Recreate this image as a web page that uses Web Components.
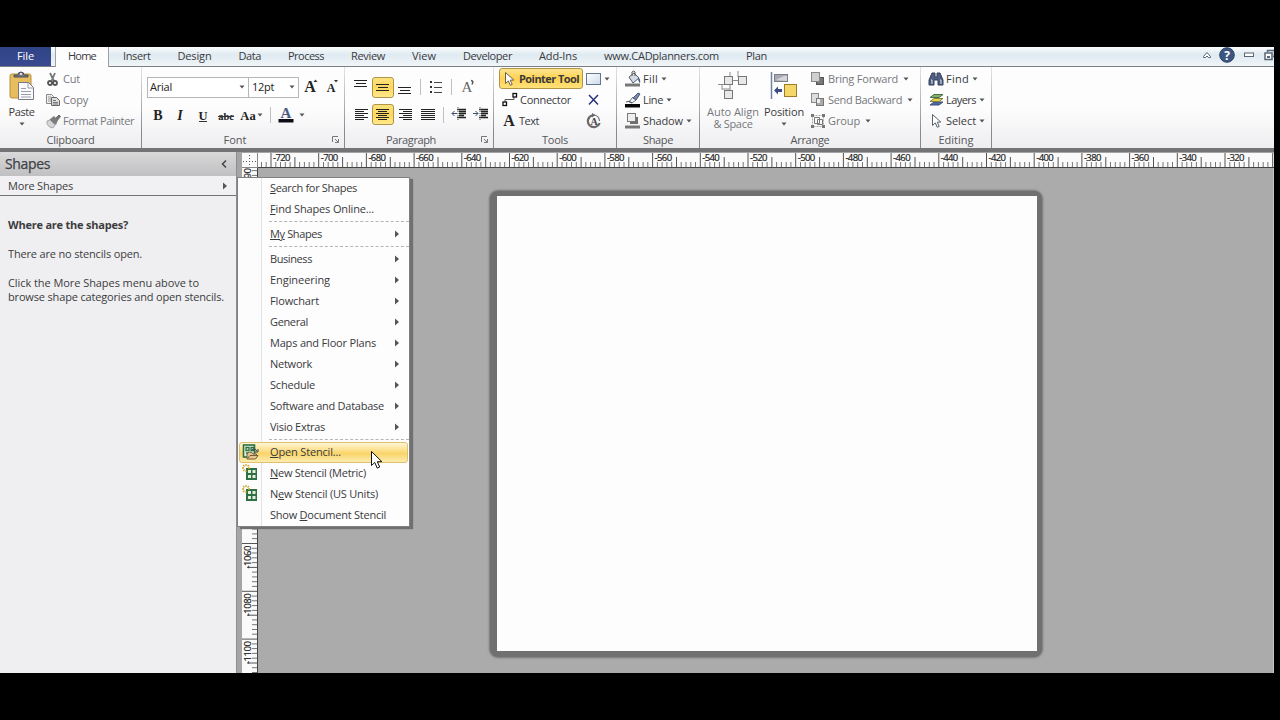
<!DOCTYPE html>
<html lang="en">
<head>
<meta charset="utf-8">
<title>Shapes</title>
<style>
  html, body { margin:0; height:100%; background:#000; overflow:hidden; }
  body { font:11px/14px "Open Sans","Noto Sans",sans-serif; color:#3a3a3c; }
</style>
</head>
<body>
<visio-app></visio-app>

<script>
(() => {
  const define = (name, html, setup) => {
    customElements.define(name, class extends HTMLElement {
      constructor() {
        super();
        this.attachShadow({ mode: "open" });
      }
      connectedCallback() {
        this.shadowRoot.innerHTML = typeof html === "function" ? html(this) : html;
        setup?.(this);
      }
    });
  };

  const svg = (w, h, body) => `<svg width="${w}" height="${h}" viewBox="0 0 ${w} ${h}" fill="none">${body}</svg>`;
  const lines = (rows, h = 16) => svg(14, h, rows.map(([x1, x2, y]) => `<path d="M${x1} ${y}.5H${x2}" stroke="#222"/>`).join(""));
  const glyph = (w, h, text, style, extra = "") =>
    svg(w, h, `<text x="${w / 2}" y="${h - 4}" text-anchor="middle" fill="#222" style="${style}">${text}</text>${extra}`);
  const serif = "font-family:'Liberation Serif',serif;font-weight:bold;";

  const icons = {
    paste: svg(26, 30, `<rect x="1" y="3" width="21" height="24" rx="2" fill="#e7bd5f" stroke="#b98f3c"/><path d="M5 6V4h4q0-3 3-3t3 3h4v2z" fill="#777985" stroke="#4c4e58"/><circle cx="12" cy="3" r="1" fill="#fff"/><path d="M9.500 11.500h10l5 5v12h-15z" fill="#fbfbfd" stroke="#777b88"/><path d="M19 12v5h5M12 17.500h5M12 20.500h10M12 23.500h10M12 26h10" stroke="#9a9eaa"/>`),
    cut: svg(16, 16, `<path d="M5 2l4 8M10 2L6.500 10" stroke="#777" stroke-width="1.800"/><circle cx="5" cy="12" r="2" stroke="#555" stroke-width="1.800"/><circle cx="10" cy="12" r="2" stroke="#555" stroke-width="1.800"/>`),
    copy: svg(16, 16, `<path d="M1.500 2.500h5l2 2v7h-7z" fill="#eee" stroke="#888"/><path d="M3 5h3M3 7h4M3 9h4" stroke="#999"/><path d="M6.500 5.500h5l3 3v5h-8z" fill="#ddd" stroke="#666"/><path d="M8 8.500h3M8 10.500h5M8 12h5" stroke="#777"/>`),
    painter: svg(16, 16, `<path d="M9 7l5-5 1.500 1.500L11 9z" fill="#777" stroke="#666"/><path d="M4 7l5-4 4 4-2 5z" fill="#7c7c7c"/><path d="M2 8l3-1 5 5-2 3q-4 0-6-4z" fill="#d5d5d5" stroke="#aaa"/>`),
    grow: glyph(18, 18, "A", serif + "font-size:16px", `<path d="M12.500 4l2-2.500 2 2.500z" fill="#333"/>`),
    shrink: glyph(16, 18, "A", serif + "font-size:12px", `<path d="M11 2h4l-2 2.500z" fill="#333"/>`),
    bold: glyph(16, 18, "B", serif + "font-size:14px"),
    italic: glyph(16, 18, "I", serif + "font-style:italic;font-size:14px"),
    underline: glyph(16, 18, "U", serif + "font-size:12.5px", `<path d="M4 15.500h8" stroke="#333"/>`),
    strike: glyph(20, 18, "abc", serif + "font-size:10.5px", `<path d="M2 10.500h16" stroke="#333"/>`),
    caps: glyph(18, 18, "Aa", serif + "font-size:12.5px"),
    color: svg(18, 18, `<text x="9" y="12" text-anchor="middle" fill="#4d5a7c" style="${serif}font-size:15px">A</text><path d="M1.500 13h15v3.500h-15z" fill="#0c0c14"/>`),
    vtop: lines([[0, 13, 1], [2, 12, 4], [0, 13, 7]]),
    vmid: lines([[0, 13, 5], [2, 12, 8], [0, 13, 11]]),
    vbot: lines([[0, 13, 8], [2, 12, 11], [0, 13, 14]]),
    left: lines([[1, 14, 2], [1, 10, 4], [1, 14, 6], [1, 10, 8], [1, 14, 10], [1, 10, 12]]),
    center: lines([[0, 13, 2], [2, 11, 4], [0, 13, 6], [2, 11, 8], [0, 13, 10], [2, 11, 12]]),
    right: lines([[0, 13, 2], [4, 13, 4], [0, 13, 6], [4, 13, 8], [0, 13, 10], [4, 13, 12]]),
    justify: lines([[0, 14, 2], [0, 14, 4], [0, 14, 6], [0, 14, 8], [0, 14, 10], [0, 14, 12]]),
    bullets: svg(14, 16, `<path d="M5 3.500h8M5 8.500h8M5 13.500h8" stroke="#444"/><path d="M1 2h2v2H1zM1 7h2v2H1zM1 12h2v2H1z" fill="#333"/>`),
    rotateText: svg(16, 18, `<text x="7" y="14" text-anchor="middle" fill="#666" style="${serif}font-size:15px;font-weight:normal">A</text><path d="M11 2.500q3 0 1 4" stroke="#555" stroke-width="1.500"/>`),
    outdent: svg(16, 16, `<path d="M6 2.500h9M8 4.500h7M8 6.500h7M8 8.500h5M6 10.500h9" stroke="#222" stroke-width="1.300"/><path d="M7 0v14" stroke="#555" stroke-dasharray="1 1"/><path d="M1 6.500h5M3.500 4L1 6.500 3.500 9" stroke="#3a4a70"/>`),
    indent: svg(16, 16, `<path d="M6 2.500h9M8 4.500h7M8 6.500h7M8 8.500h5M6 10.500h9" stroke="#222" stroke-width="1.300"/><path d="M7 0v14" stroke="#555" stroke-dasharray="1 1"/><path d="M0 6.500h5M2.500 4L5 6.500 2.500 9" stroke="#3a4a70"/>`),
    pointer: svg(12, 16, `<path d="M2.500 1.500v11l2.800-2.600 2 4.400 1.900-.9-2-4.200 3.600-.2z" fill="#fff" stroke="#66604e"/>`),
    connector: svg(16, 16, `<path d="M3 10V7.500h9V5" stroke="#555"/><rect x="1" y="10" width="3.500" height="3.500" fill="#fff" stroke="#111" stroke-width="1.300"/><rect x="11" y="1.500" width="3.500" height="3.500" fill="#fff" stroke="#111" stroke-width="1.300"/>`),
    text: glyph(16, 18, "A", serif + "font-size:16px"),
    rect: svg(16, 14, `<defs><linearGradient id="g" x2="1" y2="1"><stop stop-color="#fff"/><stop offset="1" stop-color="#cddbea"/></linearGradient></defs><rect x=".5" y="1.500" width="14" height="11" fill="url(#g)" stroke="#65778f"/>`),
    cross: svg(16, 14, `<path d="M3 2l9 9.500M12 2L3 11.500" stroke="#27317c" stroke-width="1.500"/>`),
    textBlock: svg(16, 16, `<path d="M6.500 2.300A6 6 0 1 0 13.600 10" stroke="#6a6a6e" stroke-width="2.200"/><path d="M7 2q6 0 6.500 6" stroke="#6a6a6e" stroke-width="1.200"/><path d="M6 0l3.500 2L6 4.500z" fill="#6a6a6e"/><text x="8" y="11.500" text-anchor="middle" fill="#444" style="${serif}font-size:10px">A</text>`),
    fill: svg(18, 18, `<path d="M5 7l5-4 5 5-6 5z" fill="#d5d9e1" stroke="#596072"/><path d="M8 6V2q2-2 3 0v4" stroke="#555"/><path d="M14 7q3 2 2 6-2-1-2-6z" fill="#4b5d86"/><path d="M1 13.500h15v3H1z" fill="#777"/>`),
    line: svg(18, 18, `<path d="M5 11l4-5 3 3-4 3z" fill="#f5f5f5" stroke="#69718a"/><path d="M9 7l5-5 2 1-4 6z" fill="#7a88ad" stroke="#4c5778"/><path d="M2 11q4-2 6 1" stroke="#555"/><path d="M1 13h15v3.500H1z" fill="#080808"/>`),
    shadow: svg(18, 18, `<path d="M6 5h8v7H6z" fill="#6e6e6e"/><rect x="3.500" y="1.500" width="8" height="8" fill="#eee" stroke="#777"/><path d="M1 13.500h15v3H1z" fill="#777"/>`),
    autoAlign: svg(30, 30, `<path d="M12 1v24M20 0v6M1 13.500h10M4 18h8M0 13.500h4v5M12 9.500h16" stroke="#8d8d8d"/><rect x="6.500" y="5.500" width="8" height="8" fill="#e8e8e8" stroke="#777"/><rect x="20.500" y="5.500" width="8" height="8" fill="#e8e8e8" stroke="#777"/><rect x="6.500" y="19.500" width="8" height="8" fill="#e8e8e8" stroke="#777"/>`),
    position: svg(28, 30, `<path d="M1.500 1v27" stroke="#7182a4" stroke-width="1.500"/><rect x="4.500" y="3.500" width="13" height="7" fill="#a8a9b3" stroke="#7c7e88"/><path d="M6 9l8-4h3v5z" fill="#d5d6db"/><rect x="14.500" y="13.500" width="12" height="12" fill="#f5d668" stroke="#a07b2a"/><path d="M4 19.500l4-4v2.500h4v3H8v2.500z" fill="#3e4c86"/>`),
    forward: svg(16, 16, `<rect x="6.500" y="6.500" width="7" height="7" fill="#777" stroke="#555"/><rect x="1.500" y="1.500" width="8" height="9" fill="#cfcfcf" stroke="#888"/>`),
    backward: svg(16, 16, `<rect x="1.500" y="1.500" width="7" height="9" fill="#ddd" stroke="#888"/><rect x="6.500" y="6.500" width="7" height="7" fill="#aaa" stroke="#777"/><path d="M7 7h3v4H7z" fill="#eee"/>`),
    group: svg(16, 16, `<path d="M2.500 2.500h11v11h-11z" stroke="#aaa" stroke-dasharray="2 1"/><path d="M4.500 4.500h5v6h-5zM7.500 6.500h5v5h-5z" stroke="#777"/><path d="M1 1h3v3H1zM12 1h3v3h-3zM1 12h3v3H1zM12 12h3v3h-3z" fill="#777"/>`),
    find: svg(16, 16, `<path d="M4 2h3v4h2V2h3l3 7v5h-5V9H6v5H1V9z" fill="#4f5e7f" stroke="#34415e"/><path d="M3 9h1v4M12 9h1v4" stroke="#dbe3f2"/>`),
    layers: svg(16, 16, `<path d="M2 13l4-3h9l-4 3z" fill="#506a9f" stroke="#3a4f7d"/><path d="M2 9.500l4-3h9l-4 3z" fill="#e8d24d" stroke="#81853c"/><path d="M2 5.500l4-3h9l-4 3z" fill="#84b06a" stroke="#496e4b"/>`),
    select: svg(16, 16, `<path d="M4.500 1.500v11l2.800-2.600 2 4.400 1.900-.9-2-4.200 3.600-.2z" fill="#fff" stroke="#59606e"/>`),
    launcher: svg(8, 8, `<path d="M.5 6V.5H6M3 3l3 3M6.500 3v3.500H3" stroke="#777"/>`),
    down: svg(6, 4, `<path d="M.5 .5h5L3 3.500z" fill="#555"/>`),
    arrow: svg(6, 8, `<path d="M1 .5v7l4-3.500z" fill="#555"/>`),
    chevron: svg(6, 10, `<path d="M5 1.500L1.500 5 5 8.500" stroke="#444" stroke-width="1.500"/>`),
    collapse: svg(10, 8, `<path d="M1.500 5.500L5 1.500l3.500 4v1h-2L5 5 3.500 6.500h-2z" fill="#fff" stroke="#526273"/>`),
    help: svg(16, 16, `<circle cx="8" cy="8" r="7.300" fill="#3c5681" stroke="#2e4368"/><text x="8" y="12.500" text-anchor="middle" fill="#fff" style="font:bold 12px 'Open Sans',sans-serif">?</text>`),
    minimize: svg(11, 6, `<rect x=".5" y="1" width="9" height="3.500" fill="#fff" stroke="#596675"/>`),
    restore: svg(11, 12, `<path d="M3.500 3V1.500h7v6H9" stroke="#596675" stroke-width="1.500"/><rect x="1" y="4" width="7" height="6.500" fill="#fff" stroke="#596675" stroke-width="1.500"/><path d="M3 7h3v2H3z" fill="#596675"/>`),
    openStencil: svg(18, 18, `<rect x="1.500" y="2" width="11" height="12" fill="#e4f0df" stroke="#2e7041" stroke-width="1.600"/><path d="M4 4.500h3v3H4zM9 4.500h3v3H9zM4 10h2" stroke="#2e7041" stroke-width="1.300"/><path d="M5 16V11l2-2 3 .5 1 1.500h3.500v1.500H16L13.500 16z" fill="#e2c592" stroke="#75603b"/><path d="M5.500 15.500l2.500-3h8" stroke="#75603b"/><path d="M9.500 7q3.500-3 5.500 1.500M16 6v3h-3" stroke="#31465f"/>`),
    newStencil: svg(18, 18, `<rect x="4" y="4" width="11" height="12" fill="#2e7041"/><path d="M6 6h3v3H6zM10.500 6h3v3h-3zM6 11h3v3H6zM10.500 11h3v3h-3z" fill="#e4f0df"/><path d="M4 0v2M4 6v2M0 4h2M6 4h2M1 1l1.500 1.500M7 1L5.500 2.500M1 7l1.500-1.500" stroke="#d0a92c" stroke-width="1.300"/>`),
    cursor: svg(14, 20, `<path d="M1.500 1.500v14l3.300-3 2.400 5.600 2.500-1.100-2.400-5.300h4.600z" fill="#fff" stroke="#111"/>`)
  };

  define("ui-icon", el => `<style>:host{display:block;flex:none;line-height:0}svg{display:block}</style>${icons[el.getAttribute("name")]}`);

  const drop = `<ui-icon name="down"></ui-icon>`;

  define("ribbon-tabs", `
    <style>
      :host{display:flex;height:20px;box-sizing:border-box;align-items:stretch;background:linear-gradient(#fbfdfe,#dfeaf1 40%,#f0f5f8);border-bottom:1px solid #7c8084}
      .file{width:51px;padding-bottom:2px;box-sizing:border-box;background:linear-gradient(#2f4386,#3a4a90);color:#fff;display:flex;justify-content:center;align-items:center;margin-right:4px}
      .home{height:20px;width:54px;padding-bottom:3px;box-sizing:border-box;background:#fdfdfe;border:1px solid #9aa0a6;border-bottom:0;border-width:0 1px;display:flex;justify-content:center;align-items:center;margin-right:14px}
      nav{display:flex;gap:27px;align-items:center;padding-bottom:2px}
      .win{margin-left:auto;display:flex;align-items:center;overflow:hidden;padding-bottom:3px}
    </style>
    <div class="file"><ui-label w="17">File</ui-label></div>
    <div class="home"><ui-label w="28">Home</ui-label></div>
    <nav>
      <ui-label w="27.500">Insert</ui-label><ui-label w="34">Design</ui-label><ui-label w="22.500">Data</ui-label>
      <ui-label w="36">Process</ui-label><ui-label w="34">Review</ui-label><ui-label w="24">View</ui-label>
      <ui-label w="49">Developer</ui-label><ui-label w="38">Add-Ins</ui-label>
      <ui-label w="115">www.CADplanners.com</ui-label><ui-label w="21">Plan</ui-label>
    </nav>
    <div class="win">
      <ui-icon name="collapse"></ui-icon>
      <ui-icon name="help" style="margin:0 9px 0 7px"></ui-icon>
      <ui-icon name="minimize" style="margin-right:9px"></ui-icon>
      <ui-icon name="restore" style="margin-right:-1px"></ui-icon>
    </div>`);

  define("ribbon-group", el => `
    <style>
      :host{display:flex;flex-direction:column;flex:none;box-sizing:border-box;width:${el.getAttribute("width")}px;padding-top:1px;border-right:1px solid;border-image:linear-gradient(#e6e6e8,#87898c 80%) 1}
      .body{display:flex;height:64px}
      .foot{display:flex;height:17px;align-items:center;color:#55565a}
      .foot div{flex:1;display:flex;justify-content:center}
      .foot ui-icon{margin-right:4px}
      .foot.launch div{padding-right:4px}
    </style>
    <div class="body"><slot></slot></div>
    <div class="foot ${el.hasAttribute("launcher") ? "launch" : ""}"><div><ui-label w="${el.getAttribute("label-width")}">${el.getAttribute("label")}</ui-label></div>${el.hasAttribute("launcher") ? `<ui-icon name="launcher"></ui-icon>` : ""}</div>`);

  // icon + caption on a 21px row; "menu" adds the drop arrow
  define("ribbon-command", el => `
    <style>
      :host{display:flex;height:21px;align-items:center;box-sizing:border-box;${el.hasAttribute("dim") ? "color:#77787b;" : ""}}
      .icon{width:${el.getAttribute("icon-width") || 18}px;display:flex}
      .drop{margin-left:${el.hasAttribute("dim") ? 5 : 3}px}
    </style>
    <span class="icon"><ui-icon name="${el.getAttribute("icon")}"></ui-icon></span>
    <ui-label w="${el.getAttribute("w")}"><slot></slot></ui-label>
    ${el.hasAttribute("menu") ? `<span class="drop">${drop}</span>` : ""}`);

  define("ribbon-large", el => `
    <style>
      :host{display:flex;flex-direction:column;align-items:center;flex:none;${el.hasAttribute("dim") ? "color:#77787b;" : ""}}
      .icon{height:34px;padding-top:3px;box-sizing:border-box}
      .text{display:flex;flex-direction:column;align-items:center;line-height:12px;padding-top:4px}
      .drop{margin-top:4px}
    </style>
    <div class="icon"><ui-icon name="${el.getAttribute("icon")}"></ui-icon></div>
    <div class="text"><slot></slot></div>
    ${el.hasAttribute("menu") ? `<div class="drop">${drop}</div>` : ""}`);

  // fixed width cell that centres one small tool icon
  define("tool-cell", el => `
    <style>
      :host{display:flex;flex:none;box-sizing:border-box;width:22px;height:21px;align-items:center;justify-content:center;border:1px solid transparent;border-radius:3px}
      :host([active]){background:linear-gradient(#fbe27c,#fdd75e 50%,#ffe98a);border-color:#b39347}
      :host([sep]){width:1px;height:16px;border:0;border-radius:0;background:#bfc0c3}
    </style>
    ${el.hasAttribute("sep") ? "" : `<ui-icon name="${el.getAttribute("icon")}"></ui-icon>`}`);

  define("office-ribbon", `
    <style>
      :host{display:flex;height:81px;background:linear-gradient(#fdfdfe 50%,#eeeef0)}
      .col{display:flex;flex-direction:column;box-sizing:border-box}
      .tools{display:flex;flex-direction:column;padding-top:5px}
      .tools>div{display:flex;height:28px;align-items:center}
      .tools>div+div{height:27px}
      .combo{display:flex;box-sizing:border-box;height:21px;align-items:center;justify-content:space-between;border:1px solid #b3b6bb;background:#fff;padding:0 3px 0 2px;color:#222}
      .combo+.combo{margin-left:-1px}
      .tool{display:flex;box-sizing:border-box;width:84px;height:21px;border:1px solid #b39347;border-radius:3px;background:linear-gradient(#fce591,#ffd24f 50%,#ffe27b);align-items:center;padding-left:3px;font-weight:bold}
      .row{display:flex;height:21px;align-items:center}
    </style>
    <ribbon-group width="142" label="Clipboard" label-width="48">
      <ribbon-large icon="paste" menu style="width:43px"><ui-label w="26">Paste</ui-label></ribbon-large>
      <div class="col" style="padding-left:2px">
        <ribbon-command icon="cut" w="17" dim>Cut</ribbon-command>
        <ribbon-command icon="copy" w="25" dim>Copy</ribbon-command>
        <ribbon-command icon="painter" w="71" dim>Format Painter</ribbon-command>
      </div>
    </ribbon-group>
    <ribbon-group width="203" label="Font" label-width="23" launcher>
      <div class="tools" style="padding-left:5px">
        <div>
          <div class="combo" style="width:102px"><ui-label w="22">Arial</ui-label><ui-icon name="down"></ui-icon></div>
          <div class="combo" style="width:51px;padding-left:3px"><ui-label w="22">12pt</ui-label><ui-icon name="down"></ui-icon></div>
          <tool-cell icon="grow"></tool-cell><tool-cell icon="shrink" style="width:20px"></tool-cell>
        </div>
        <div>
          <tool-cell icon="bold"></tool-cell><tool-cell icon="italic"></tool-cell><tool-cell icon="underline" style="width:23px"></tool-cell>
          <tool-cell icon="strike" style="width:24px"></tool-cell><tool-cell icon="caps" style="width:20px"></tool-cell>
          <ui-icon name="down" style="margin-left:-1px"></ui-icon><tool-cell sep style="margin:0 4px 0 7px"></tool-cell>
          <tool-cell icon="color"></tool-cell><ui-icon name="down" style="margin-left:2px"></ui-icon>
        </div>
      </div>
    </ribbon-group>
    <ribbon-group width="149" label="Paragraph" label-width="50" launcher>
      <div class="tools" style="padding-left:5px">
        <div>
          <tool-cell icon="vtop"></tool-cell><tool-cell icon="vmid" active></tool-cell><tool-cell icon="vbot"></tool-cell>
          <tool-cell sep style="margin:0 4px"></tool-cell><tool-cell icon="bullets"></tool-cell>
          <tool-cell sep style="margin:0 5px 0 4px"></tool-cell><tool-cell icon="rotateText"></tool-cell>
        </div>
        <div>
          <tool-cell icon="left"></tool-cell><tool-cell icon="center" active></tool-cell><tool-cell icon="right" style="width:23px"></tool-cell><tool-cell icon="justify"></tool-cell>
          <tool-cell sep style="margin:0 4px"></tool-cell><tool-cell icon="outdent"></tool-cell><tool-cell icon="indent" style="width:21px"></tool-cell>
        </div>
      </div>
    </ribbon-group>
    <ribbon-group width="123" label="Tools" label-width="26">
      <div class="col" style="padding-left:5px;width:89px">
        <div class="tool"><ui-icon name="pointer"></ui-icon><ui-label w="60" style="margin-left:4px">Pointer Tool</ui-label></div>
        <ribbon-command icon="connector" icon-width="18" w="51" style="padding-left:3px">Connector</ribbon-command>
        <ribbon-command icon="text" icon-width="18" w="20" style="padding-left:2px">Text</ribbon-command>
      </div>
      <div class="col" style="padding-left:3px">
        <div class="row"><ui-icon name="rect"></ui-icon><ui-icon name="down" style="margin-left:2px"></ui-icon></div>
        <div class="row"><ui-icon name="cross"></ui-icon></div>
        <div class="row"><ui-icon name="textBlock"></ui-icon></div>
      </div>
    </ribbon-group>
    <ribbon-group width="83" label="Shape" label-width="30">
      <div class="col" style="padding-left:7px">
        <ribbon-command icon="fill" icon-width="19" w="15" menu>Fill</ribbon-command>
        <ribbon-command icon="line" icon-width="19" w="20" menu>Line</ribbon-command>
        <ribbon-command icon="shadow" icon-width="19" w="40" menu>Shadow</ribbon-command>
      </div>
    </ribbon-group>
    <ribbon-group width="221" label="Arrange" label-width="39">
      <ribbon-large icon="autoAlign" dim style="width:52px;padding-left:7px"><ui-label w="52">Auto Align</ui-label><ui-label w="39">&amp; Space</ui-label></ribbon-large>
      <ribbon-large icon="position" menu style="width:40px;padding-left:5px"><ui-label w="40">Position</ui-label></ribbon-large>
      <div class="col" style="padding-left:6px">
        <ribbon-command icon="forward" w="70" dim menu>Bring Forward</ribbon-command>
        <ribbon-command icon="backward" w="74" dim menu>Send Backward</ribbon-command>
        <ribbon-command icon="group" w="32" dim menu>Group</ribbon-command>
      </div>
    </ribbon-group>
    <ribbon-group width="71" label="Editing" label-width="35">
      <div class="col" style="padding-left:7px">
        <ribbon-command icon="find" w="23" menu>Find</ribbon-command>
        <ribbon-command icon="layers" w="30" menu>Layers</ribbon-command>
        <ribbon-command icon="select" w="30" menu>Select</ribbon-command>
      </div>
    </ribbon-group>`);

  define("shapes-pane", `
    <style>
      :host{display:block;width:236px;flex:none;background:#efeff1;border-right:1px solid #8d8d90;color:#3c3c40}
      header{display:flex;justify-content:space-between;align-items:center;height:24px;padding:0 9px 0 5px;background:linear-gradient(#d9d9da,#c0c0c2);font-size:14px;color:#3e4048;-webkit-text-stroke:.25px}
      .more{display:flex;justify-content:space-between;align-items:center;height:19px;padding:0 8px;border-bottom:1px solid #737376;background:#f1f1f3}
      .help{padding:22.400px 8px;line-height:14.300px}
      .help div{margin-bottom:14.300px}
      ui-label{display:block}
    </style>
    <header><ui-label w="45">Shapes</ui-label><ui-icon name="chevron"></ui-icon></header>
    <div class="more"><ui-label w="65">More Shapes</ui-label><ui-icon name="arrow"></ui-icon></div>
    <div class="help">
      <div><b><ui-label w="120">Where are the shapes?</ui-label></b></div>
      <div><ui-label w="134">There are no stencils open.</ui-label></div>
      <div><ui-label w="191">Click the More Shapes menu above to</ui-label><ui-label w="216">browse shape categories and open stencils.</ui-label></div>
    </div>`);

  const STEP = 47.7;
  const rulerStyle = `<style>:host{display:block;overflow:hidden;background:#fafafa}svg{display:block}text{font:9.5px "Open Sans",sans-serif;fill:#222;stroke:#222;stroke-width:.2px}</style>`;

  define("ruler-h", () => {
    let out = "";
    for (let i = -1; i < 22; i++) {
      const x = 13 + i * STEP;
      for (let j = 0; j < 10; j++) {
        const tx = (x + j * STEP / 10).toFixed(1);
        if (tx < 0 || tx > 1016) continue;
        out += `<path d="M${tx} ${j === 0 ? 0 : j === 5 ? 4 : 9}V15" stroke="${j % 5 ? "#777" : "#555"}"/>`;
      }
      if (i >= 0 && i < 21) out += `<text x="${x + 2}" y="8" textLength="17.500">${-720 + i * 20}</text>`;
    }
    return rulerStyle + `<style>:host,svg{overflow:visible}</style><svg width="1015" height="15">${out}<path d="M0 14.500H1016" stroke="#444"/></svg>`;
  });

  define("ruler-v", () => {
    let out = "";
    for (let i = 0; i < 11; i++) {
      const y = -6.9 + i * STEP + i * .1;
      for (let j = 0; j < 10; j++) {
        const ty = (y + j * STEP / 10).toFixed(1);
        out += `<path d="M${j === 0 ? 0 : j === 5 ? 5 : 10} ${ty}H16" stroke="${j % 5 ? "#777" : "#555"}"/>`;
      }
      const value = 900 + i * 20;
      // only the ends of this ruler stick out from behind the open menu
      if (i === 0 || i > 7) out += `<text transform="translate(8.500 ${y + (value > 999 ? 25 : 20)}) rotate(-90)" textLength="${value > 999 ? 23 : 18}">-${value}</text>`;
    }
    return rulerStyle + `<svg width="16" height="505">${out}<path d="M15.500 0V505" stroke="#444"/></svg>`;
  });

  define("drawing-area", `
    <style>
      :host{display:grid;grid-template:15px 1fr / 16px 1fr;flex:1;padding:1px 0 0 5px;background:#a5a5a7;min-width:0}
      .corner{background:#fafafa;border:1px solid #888;border-width:0 1px 1px 0;display:grid;place-items:center}
      .canvas{background:#ababab;border-right:1px solid #c6c6c6;padding:28px 0 0 239px;min-width:0}
      .page{width:540px;height:455px;background:#fdfdfd}
      .shade{width:540px;padding:5px 5px 6px 7px;margin:-5px 0 0 -7px;background:#707070;border-radius:8px;box-shadow:0 0 2px 1px #777}
    </style>
    <div class="corner"><svg width="13" height="13"><path d="M0 7.500h13M6.500 1v12" stroke="#555" stroke-dasharray="1 2"/></svg></div>
    <ruler-h></ruler-h>
    <ruler-v></ruler-v>
    <div class="canvas"><div class="shade"><div class="page"></div></div></div>`);

  define("menu-item", el => `
    <style>
      :host{display:flex;height:21px;box-sizing:border-box;align-items:center;margin:0 1px;padding:0 7px 1px 0;border:1px solid transparent}
      :host([active]){background:linear-gradient(#fff6d6,#fbdc7d 45%,#f9d468 55%,#fdebb0);border-color:#dfc06e;border-radius:3px}
      .icon{width:30px;box-sizing:border-box;padding-left:2px}
      .arrow{margin-left:auto}
    </style>
    <span class="icon">${el.hasAttribute("icon") ? `<ui-icon name="${el.getAttribute("icon")}"></ui-icon>` : ""}</span>
    <ui-label w="${el.getAttribute("w")}"><slot></slot></ui-label>
    ${el.hasAttribute("sub") ? `<ui-icon class="arrow" name="arrow"></ui-icon>` : ""}`);

  define("popup-menu", `
    <style>
      :host{display:block;box-sizing:border-box;width:173px;height:350px;border:1px solid #808083;background:linear-gradient(90deg,#fcfcfc 23px,#e2e3e5 23px,#e2e3e5 24px,#fdfdfd 24px);box-shadow:3px 2px 1px #707070}
      hr{height:0;margin:1px 0 2px 31px;border:0;border-top:1px dashed #b5b5b8}
    </style>
    <menu-item w="87"><u>S</u>earch for Shapes</menu-item>
    <menu-item w="104"><u>F</u>ind Shapes Online...</menu-item>
    <hr>
    <menu-item w="52" sub><u>My</u> Shapes</menu-item>
    <hr>
    <menu-item w="42" sub>Business</menu-item>
    <menu-item w="60" sub>Engineering</menu-item>
    <menu-item w="49" sub>Flowchart</menu-item>
    <menu-item w="38" sub>General</menu-item>
    <menu-item w="106" sub>Maps and Floor Plans</menu-item>
    <menu-item w="42" sub>Network</menu-item>
    <menu-item w="45" sub>Schedule</menu-item>
    <menu-item w="114" sub>Software and Database</menu-item>
    <menu-item w="55" sub>Visio Extras</menu-item>
    <hr>
    <menu-item w="71" icon="openStencil" active><u>O</u>pen Stencil...</menu-item>
    <menu-item w="96" icon="newStencil"><u>N</u>ew Stencil (Metric)</menu-item>
    <menu-item w="108" icon="newStencil">N<u>e</u>w Stencil (US Units)</menu-item>
    <menu-item w="116">Show <u>D</u>ocument Stencil</menu-item>`);

  define("visio-app", `
    <style>
      :host{display:flex;flex-direction:column;box-sizing:border-box;width:1274px;height:673px;padding-top:47px;position:relative}
      .edge{height:4px;background:#747476}
      main{display:flex;flex:1;min-height:0;overflow:hidden}
      popup-menu{position:absolute;left:237px;top:177px}
      .cursor{position:absolute;left:370px;top:450px}
    </style>
    <ribbon-tabs></ribbon-tabs>
    <office-ribbon></office-ribbon>
    <div class="edge"></div>
    <main><shapes-pane></shapes-pane><drawing-area></drawing-area></main>
    <popup-menu></popup-menu>
    <ui-icon class="cursor" name="cursor"></ui-icon>`);

  // caption tracked out (or in) to the given advance width
  define("ui-label", `<style>:host{display:inline-block;flex:none;white-space:nowrap}span{display:inline-block}</style><span><slot></slot></span>`, el => {
    const width = Number(el.getAttribute("w"));
    const span = el.shadowRoot.querySelector("span");
    const slotted = [...el.childNodes].flatMap(n => n.nodeName === "SLOT" ? n.assignedNodes({ flatten: true }) : [n]);
    const count = slotted.map(n => n.textContent).join("").trim().length;
    const natural = span.getBoundingClientRect().width;
    el.style.width = `${width}px`;
    if (count > 1 && natural) span.style.letterSpacing = `${(width - natural) / count}px`;
  });
})();
</script>
</body>
</html>
